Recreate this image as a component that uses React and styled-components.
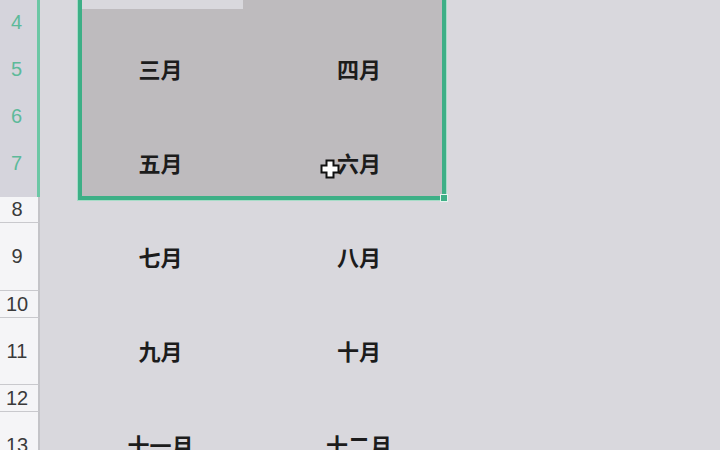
import styled, { createGlobalStyle } from "styled-components";

const GlobalStyle = createGlobalStyle`
  html, body {
    margin: 0;
    padding: 0;
    background: #d9d8dd;
    overflow: hidden;
  }
`

const rows = [
    { n: 3, h: 9, sel: true, cells: ['', ''] },
    { n: 4, h: 27, sel: true, cells: ['', ''] },
    { n: 5, h: 67, sel: true, cells: ['三月', '四月'] },
    { n: 6, h: 27, sel: true, cells: ['', ''] },
    { n: 7, h: 67, sel: true, cells: ['五月', '六月'] },
    { n: 8, h: 26, cells: ['', ''] },
    { n: 9, h: 68, cells: ['七月', '八月'] },
    { n: 10, h: 27, cells: ['', ''] },
    { n: 11, h: 67, cells: ['九月', '十月'] },
    { n: 12, h: 27, cells: ['', ''] },
    { n: 13, h: 67, cells: ['十一月', '十二月'] },
]

export default function App(){
    return(
        <>
            <GlobalStyle/>
            <Sheet>
                <Grid $rows={rows.map(r => `${r.h}px`).join(' ')}>
                    {rows.map(r => (
                        <Row key={r.n}>
                            <RowHead $sel={r.sel}>{r.n === 3 ? '' : r.n}</RowHead>
                            <Cell/>
                            <Cell $sel={r.sel} $active={r.n === 3}>{r.cells[0]}</Cell>
                            <Cell $sel={r.sel} $shift>{r.cells[1]}</Cell>
                            <Cell/>
                        </Row>
                    ))}
                    <Selection>
                        <FillHandle/>
                    </Selection>
                    <Cursor viewBox="0 0 20 20" width="20" height="20">
                        <path d="M6.5 1.5h7v5h5v7h-5v5h-7v-5h-5v-7h5z" fill="#fff" stroke="#111" strokeWidth="2"/>
                    </Cursor>
                </Grid>
            </Sheet>
        </>
    )
}

const Sheet = styled.div`
    width: 720px;
    height: 450px;
    overflow: hidden;
    background: #d9d8dd;
    font-family: "Noto Sans CJK SC", "Noto Sans", sans-serif;
`

const Grid = styled.div`
    position: relative;
    display: grid;
    grid-template-columns: 40px 38px 165px 200px 1fr;
    grid-template-rows: ${p => p.$rows};
`

const Row = styled.div`
    display: contents;
`

const RowHead = styled.div`
    display: flex;
    align-items: center;
    justify-content: center;
    padding-right: 4px;
    font-family: "Liberation Sans", Arial, sans-serif;
    font-size: 20px;
    color: ${p => p.$sel ? '#5dba9a' : '#3a3a3a'};
    background: ${p => p.$sel ? '#d5d4dc' : '#f5f5f7'};
    border-right: ${p => p.$sel ? '3px solid #6cc7a5' : '2px solid #c4c4c8'};
    border-bottom: ${p => p.$sel ? 'none' : '1px solid #c9c9cd'};
    box-sizing: border-box;
`

const Cell = styled.div`
    display: flex;
    align-items: center;
    justify-content: center;
    padding-left: ${p => p.$shift ? '32px' : '0'};
    padding-bottom: 3px;
    font-size: 22px;
    font-weight: 700;
    color: #1c1c1c;
    background: ${p => p.$active ? '#d9d8dd' : p.$sel ? '#bebbbe' : '#d9d8dd'};
    white-space: nowrap;
`

const Selection = styled.div`
    position: absolute;
    left: 78px;
    top: -10px;
    width: 368px;
    height: 210px;
    box-sizing: border-box;
    border: 4px solid #3daf86;
    box-shadow: 0 0 0 1px #a6dcc7;
    pointer-events: none;
`

const FillHandle = styled.div`
    position: absolute;
    right: -6px;
    bottom: -6px;
    width: 6px;
    height: 6px;
    background: #3daf86;
    border: 1px solid #e4f4ee;
`

const Cursor = styled.svg`
    position: absolute;
    left: 320px;
    top: 159px;
`
